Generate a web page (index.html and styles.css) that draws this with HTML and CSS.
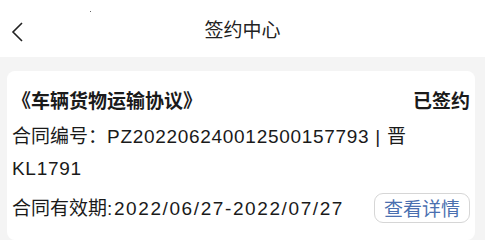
FILE: index.html
```html
<!DOCTYPE html>
<html lang="zh-CN">
<head>
    <meta charset="UTF-8">
    <meta name="viewport" content="width=device-width, initial-scale=1.0">
    <title>签约中心</title>
    <link rel="stylesheet" href="styles.css">
</head>
<body>
    <div class="header">
        <span class="dot"></span>
        <svg class="back" width="14" height="22" viewBox="0 0 14 22">
            <path d="M12 2 L3 11 L12 20" fill="none" stroke="#222" stroke-width="1.6"/>
        </svg>
        <div class="title">签约中心</div>
    </div>

    <div class="page">
        <div class="card">
            <div class="card-head">
                <span class="name">《车辆货物运输协议》</span>
                <span class="state">已签约</span>
            </div>
            <div class="code">合同编号：<span class="num">PZ202206240012500157793 | </span>晋<span class="num">KL1791</span></div>
            <div class="card-foot">
                <span class="date">合同有效期<span class="num wide">:2022/06/27-2022/07/27</span></span>
                <button class="detail">查看详情</button>
            </div>
        </div>
    </div>
</body>
</html>
```

FILE: styles.css
```css
body {
    margin: 0;
    background: #f4f4f4;
    font-family: "Noto Sans CJK SC", "Noto Sans", sans-serif;
    color: #1a1a1a;
}
.header {
    position: relative;
    height: 57px;
    background: #fff;
    display: flex;
    align-items: center;
    justify-content: center;
}
.dot {
    position: absolute;
    left: 90px;
    top: 11px;
    width: 1px;
    height: 1px;
    background: #666;
}
.back {
    position: absolute;
    left: 10px;
    top: 21px;
}
.title {
    font-size: 19px;
    color: #222;
}
.page {
    padding: 14px 10px 4px 7px;
}
.card {
    background: #fff;
    border-radius: 8px;
    padding: 14px 5px 16px 5px;
}
.card-head {
    display: flex;
    justify-content: space-between;
    align-items: center;
    font-size: 19px;
    font-weight: bold;
    line-height: 30px;
}
.code {
    margin-top: 5px;
    font-size: 19px;
    line-height: 30px;
}
.num {
    font-family: "Liberation Sans", "Noto Sans CJK SC", sans-serif;
    letter-spacing: 0.7px;
}
.num.wide {
    letter-spacing: 1.6px;
}
.card-foot {
    margin-top: 8px;
    display: flex;
    justify-content: space-between;
    align-items: center;
    font-size: 19px;
    line-height: 30px;
}
.detail {
    font-family: inherit;
    font-size: 19px;
    color: #4a6fb0;
    background: #fff;
    border: 1px solid #d6d6d6;
    border-radius: 9px;
    padding: 0 9px;
    height: 30px;
    line-height: 28px;
}
```
